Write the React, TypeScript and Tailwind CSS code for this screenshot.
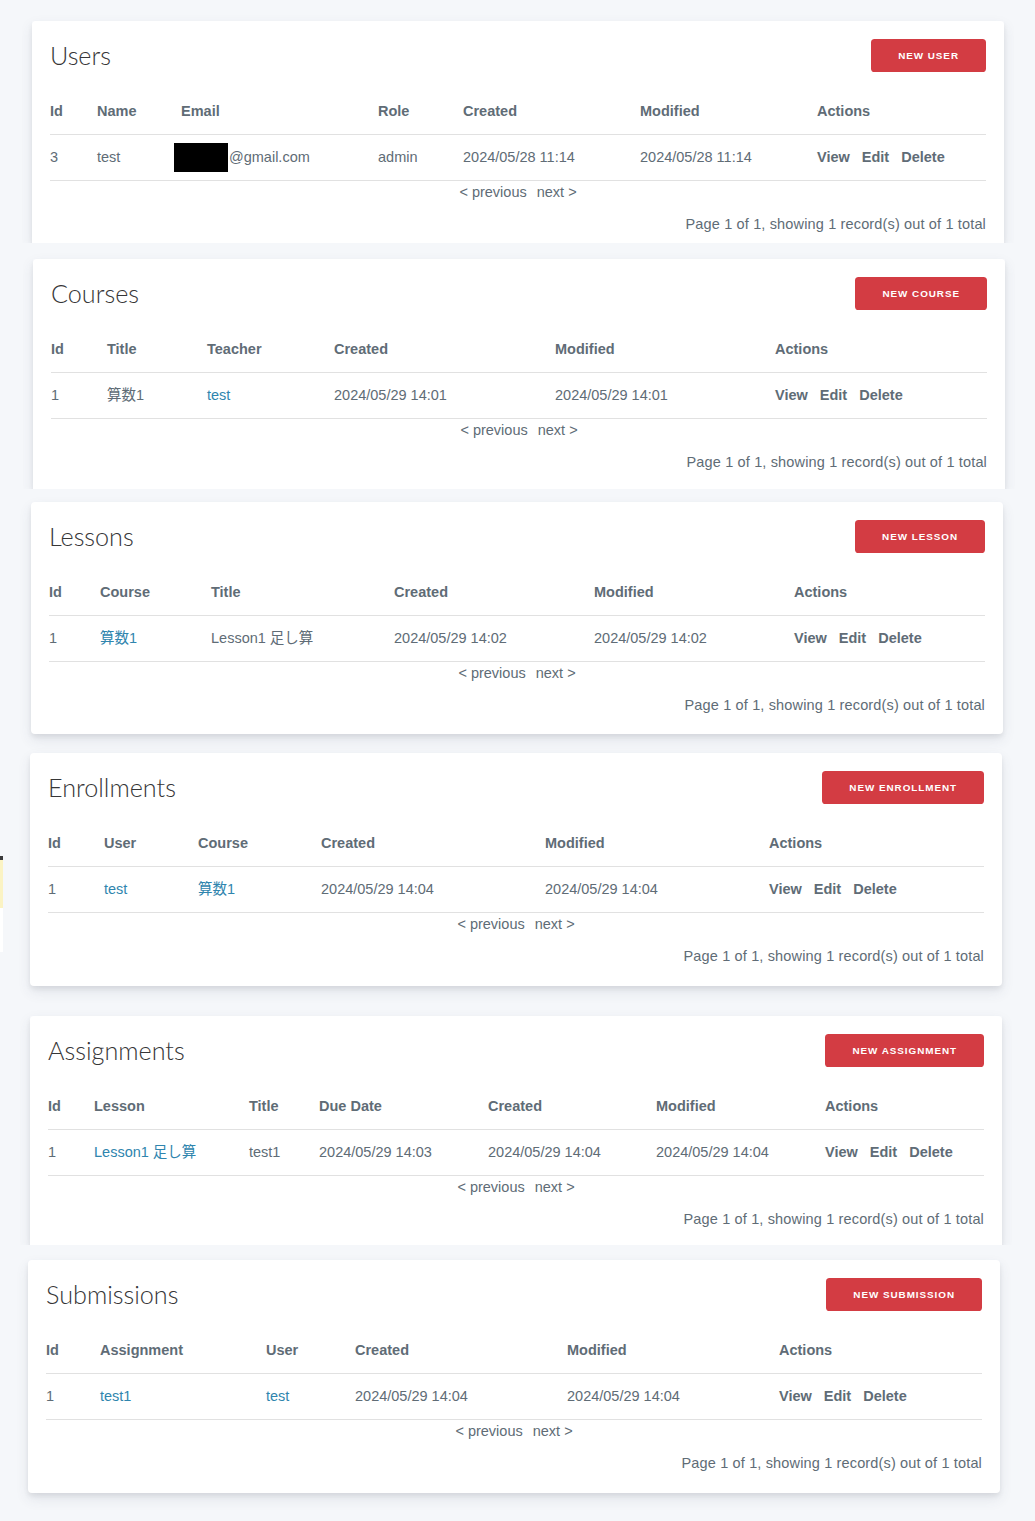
import React from "react";

type Cell = string | { link: string } | { email: string } | { actions: true };

interface CardConfig {
  title: string;
  button: string;
  place: string; // margin classes for this card
  height: string;
  clipped: boolean;
  cols: string;
  headers: string[];
  row: Cell[];
}

const ACTIONS: Cell = { actions: true };

const cards: CardConfig[] = [
  {
    title: "Users",
    button: "New User",
    place: "ml-[32px] mt-[21px]",
    height: "h-[222px]",
    clipped: true,
    cols: "grid-cols-[47px_84px_197px_85px_177px_177px_1fr]",
    headers: ["Id", "Name", "Email", "Role", "Created", "Modified", "Actions"],
    row: ["3", "test", { email: "@gmail.com" }, "admin", "2024/05/28 11:14", "2024/05/28 11:14", ACTIONS],
  },
  {
    title: "Courses",
    button: "New Course",
    place: "ml-[33px] mt-[16px]",
    height: "h-[230px]",
    clipped: true,
    cols: "grid-cols-[56px_100px_127px_221px_220px_1fr]",
    headers: ["Id", "Title", "Teacher", "Created", "Modified", "Actions"],
    row: ["1", "算数1", { link: "test" }, "2024/05/29 14:01", "2024/05/29 14:01", ACTIONS],
  },
  {
    title: "Lessons",
    button: "New Lesson",
    place: "ml-[31px] mt-[13px]",
    height: "h-[232px]",
    clipped: false,
    cols: "grid-cols-[51px_111px_183px_200px_200px_1fr]",
    headers: ["Id", "Course", "Title", "Created", "Modified", "Actions"],
    row: ["1", { link: "算数1" }, "Lesson1 足し算", "2024/05/29 14:02", "2024/05/29 14:02", ACTIONS],
  },
  {
    title: "Enrollments",
    button: "New Enrollment",
    place: "ml-[30px] mt-[19px]",
    height: "h-[233px]",
    clipped: false,
    cols: "grid-cols-[56px_94px_123px_224px_224px_1fr]",
    headers: ["Id", "User", "Course", "Created", "Modified", "Actions"],
    row: ["1", { link: "test" }, { link: "算数1" }, "2024/05/29 14:04", "2024/05/29 14:04", ACTIONS],
  },
  {
    title: "Assignments",
    button: "New Assignment",
    place: "ml-[30px] mt-[30px]",
    height: "h-[229px]",
    clipped: true,
    cols: "grid-cols-[46px_155px_70px_169px_168px_169px_1fr]",
    headers: ["Id", "Lesson", "Title", "Due Date", "Created", "Modified", "Actions"],
    row: ["1", { link: "Lesson1 足し算" }, "test1", "2024/05/29 14:03", "2024/05/29 14:04", "2024/05/29 14:04", ACTIONS],
  },
  {
    title: "Submissions",
    button: "New Submission",
    place: "ml-[28px] mt-[15px]",
    height: "h-[233px]",
    clipped: false,
    cols: "grid-cols-[54px_166px_89px_212px_212px_1fr]",
    headers: ["Id", "Assignment", "User", "Created", "Modified", "Actions"],
    row: ["1", { link: "test1" }, { link: "test" }, "2024/05/29 14:04", "2024/05/29 14:04", ACTIONS],
  },
];

function cn(...parts: (string | false | undefined)[]) {
  return parts.filter(Boolean).join(" ");
}

function renderCell(cell: Cell, i: number) {
  if (typeof cell === "string") {
    return <div key={i}>{cell}</div>;
  }
  if ("link" in cell) {
    return (
      <div key={i}>
        <a className="text-[#2f85ae]">{cell.link}</a>
      </div>
    );
  }
  if ("email" in cell) {
    return (
      <div key={i} className="flex items-center">
        {/* redacted part of the address */}
        <span className="-ml-[7px] mr-px inline-block h-[29px] w-[54px] bg-black" />
        <span>{cell.email}</span>
      </div>
    );
  }
  return (
    <div key={i} className="flex gap-[12px] font-bold">
      <a>View</a>
      <a>Edit</a>
      <a>Delete</a>
    </div>
  );
}

const SHADOW = "shadow-[0_6px_13px_0_rgba(59,65,94,0.1),0_3px_5px_0_rgba(0,0,0,0.07)]";

function IndexCard({ card }: { card: CardConfig }) {
  const body = (
    <div
      className={cn(
        "w-[972px] overflow-hidden bg-white px-[18px] pt-[18px]",
        card.height,
        card.clipped ? "rounded-t-[4px]" : "rounded-[4px] " + SHADOW
      )}
    >
      <div className="flex h-[33px] items-center justify-between">
        <h3 className="font-['Lato','Liberation_Sans',sans-serif] text-[25.2px] leading-none font-light text-[#363637]">
          {card.title}
        </h3>
        <a className="flex h-[33px] items-center rounded-[3.6px] bg-[#d33c43] px-[27px] text-[9.9px] font-bold tracking-[0.95px] text-white uppercase">
          {card.button}
        </a>
      </div>

      <div className="mt-[17px]">
        <div className={cn("grid h-[46px] items-center border-b border-[#e1e1e1] font-bold", card.cols)}>
          {card.headers.map((h) => (
            <div key={h}>{h}</div>
          ))}
        </div>
        <div className={cn("grid h-[46px] items-center border-b border-[#e1e1e1]", card.cols)}>
          {card.row.map(renderCell)}
        </div>
      </div>

      <ul className="flex justify-center gap-[10px] leading-[23px]">
        <li>&lt; previous</li>
        <li>next &gt;</li>
      </ul>
      <p className="mt-[9px] text-right leading-[23px] tracking-[0.15px]">
        Page 1 of 1, showing 1 record(s) out of 1 total
      </p>
    </div>
  );

  if (!card.clipped) {
    return <div className={card.place}>{body}</div>;
  }

  // cut off at the bottom like the original capture, keeping the side shadow
  return (
    <div className={card.place}>
      <div className="-mx-[10px] -mt-[10px] overflow-hidden px-[10px] pt-[10px]">
        <div className={SHADOW}>{body}</div>
      </div>
    </div>
  );
}

export default function App() {
  return (
    <div className="relative flex min-h-[1521px] flex-col items-start overflow-hidden bg-[#f5f7fa] pb-[28px] font-['Liberation_Sans','Noto_Sans_CJK_JP',Arial,sans-serif] text-[14.5px] leading-[23px] text-[#606c76]">
      {/* stray sliver at the left edge of the capture */}
      <div className="absolute top-[856px] left-0 w-[3px]">
        <div className="h-[4px] bg-[#3a3a3a]" />
        <div className="h-[48px] bg-[#fbf3c4]" />
        <div className="h-[44px] bg-white" />
      </div>

      {cards.map((c) => (
        <IndexCard key={c.title} card={c} />
      ))}
    </div>
  );
}
